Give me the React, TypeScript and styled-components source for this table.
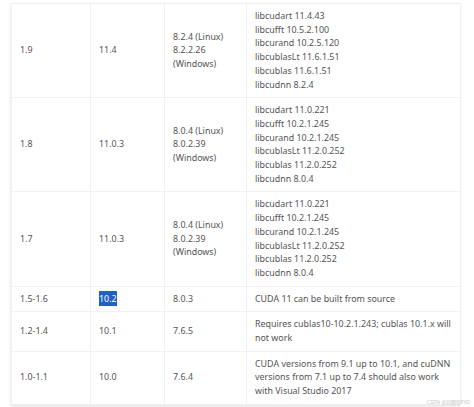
import React from 'react';
import styled, { createGlobalStyle } from 'styled-components';

const GlobalStyle = createGlobalStyle`
  html, body {
    margin: 0;
    padding: 0;
    background: #ffffff;
  }
`;

const Page = styled.div`
  position: relative;
  width: 474px;
  height: 407px;
  overflow: hidden;
  padding: 3px 0 0 11px;
  box-sizing: border-box;
  font-family: 'Noto Sans', 'Open Sans', sans-serif;
`;

const Card = styled.div`
  width: 449px;
  box-shadow: 0 1px 3px rgba(0, 0, 0, 0.14);
  background: #fff;
`;

const Table = styled.table`
  width: 449px;
  border-collapse: collapse;
  table-layout: fixed;
`;

const Cell = styled.td`
  border: 1px solid #f1f1f1;
  padding: 5px 8px 6px 8px;
  font-size: 8.9px;
  line-height: 13.7px;
  color: #555555;
  vertical-align: middle;
  text-align: left;
`;

const Selected = styled.span`
  background: #2160c4;
  color: #ffffff;
  padding: 1px 0;
`;

const Watermark = styled.div`
  position: absolute;
  right: 4px;
  bottom: 2px;
  font-size: 5px;
  line-height: 6px;
  color: #c8c8c8;
  font-family: 'Noto Sans', 'Noto Sans CJK SC', sans-serif;
`;

type Row = {
  torch: string;
  cuda: React.ReactNode;
  cudnn: string[];
  notes: string[];
};

const rows: Row[] = [
  {
    torch: '1.9',
    cuda: '11.4',
    cudnn: ['8.2.4 (Linux)', '8.2.2.26', '(Windows)'],
    notes: [
      'libcudart 11.4.43',
      'libcufft 10.5.2.100',
      'libcurand 10.2.5.120',
      'libcublasLt 11.6.1.51',
      'libcublas 11.6.1.51',
      'libcudnn 8.2.4',
    ],
  },
  {
    torch: '1.8',
    cuda: '11.0.3',
    cudnn: ['8.0.4 (Linux)', '8.0.2.39', '(Windows)'],
    notes: [
      'libcudart 11.0.221',
      'libcufft 10.2.1.245',
      'libcurand 10.2.1.245',
      'libcublasLt 11.2.0.252',
      'libcublas 11.2.0.252',
      'libcudnn 8.0.4',
    ],
  },
  {
    torch: '1.7',
    cuda: '11.0.3',
    cudnn: ['8.0.4 (Linux)', '8.0.2.39', '(Windows)'],
    notes: [
      'libcudart 11.0.221',
      'libcufft 10.2.1.245',
      'libcurand 10.2.1.245',
      'libcublasLt 11.2.0.252',
      'libcublas 11.2.0.252',
      'libcudnn 8.0.4',
    ],
  },
  {
    torch: '1.5-1.6',
    cuda: <Selected>10.2</Selected>,
    cudnn: ['8.0.3'],
    notes: ['CUDA 11 can be built from source'],
  },
  {
    torch: '1.2-1.4',
    cuda: '10.1',
    cudnn: ['7.6.5'],
    notes: ['Requires cublas10-10.2.1.243; cublas 10.1.x will not work'],
  },
  {
    torch: '1.0-1.1',
    cuda: '10.0',
    cudnn: ['7.6.4'],
    notes: [
      'CUDA versions from 9.1 up to 10.1, and cuDNN versions from 7.1 up to 7.4 should also work with Visual Studio 2017',
    ],
  },
];

const Lines = ({ items }: { items: string[] }) => (
  <>
    {items.map((t, i) => (
      <div key={i}>{t}</div>
    ))}
  </>
);

export default function App() {
  return (
    <Page>
      <GlobalStyle />
      <Card>
        <Table>
          <colgroup>
            <col style={{ width: 79 }} />
            <col style={{ width: 74 }} />
            <col style={{ width: 82 }} />
            <col style={{ width: 214 }} />
          </colgroup>
          <tbody>
            {rows.map((r, i) => (
              <tr key={i}>
                <Cell>{r.torch}</Cell>
                <Cell>{r.cuda}</Cell>
                <Cell>
                  <Lines items={r.cudnn} />
                </Cell>
                <Cell>
                  <Lines items={r.notes} />
                </Cell>
              </tr>
            ))}
          </tbody>
        </Table>
      </Card>
      <Watermark>CSDN @刘鹏程FYD</Watermark>
    </Page>
  );
}
